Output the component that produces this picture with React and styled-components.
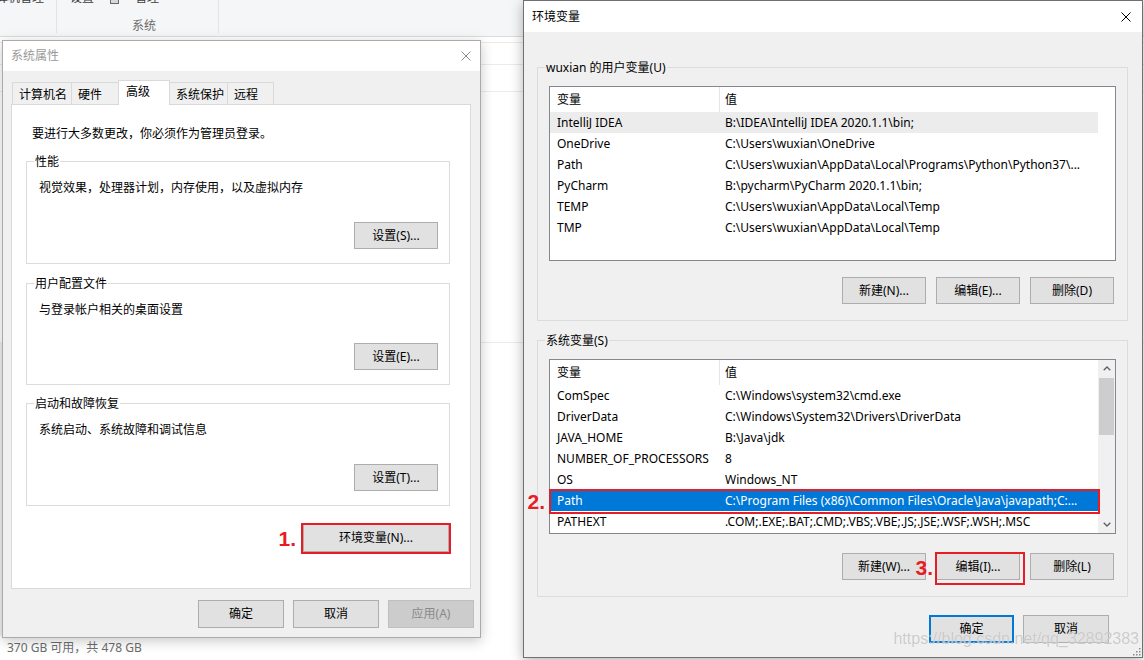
import React from "react";
import styled, { createGlobalStyle, css } from "styled-components";

const FONT = `"Noto Sans", "Noto Sans CJK SC", sans-serif`;
const RED = "#e81c24";

const GlobalStyle = createGlobalStyle`
  * { box-sizing: border-box; }
  html, body { margin: 0; padding: 0; background: #fff; }
  body {
    font-family: ${FONT};
    font-size: 12px;
    line-height: 16px;
    color: #000;
    overflow: hidden;
  }
`;

const Desktop = styled.div`
  position: relative;
  width: 1144px;
  height: 660px;
  overflow: hidden;
  background: #fff;
`;

/* explorer window behind the dialogs */

const Explorer = styled.div`
  display: flex;
  flex-direction: column;
  height: 100%;
`;

const Ribbon = styled.div`
  flex: none;
  display: flex;
  height: 37px;
  background: #f5f6f7;
  border-bottom: 1px solid #dadbdc;
  overflow: hidden;
`;

const RibbonGroup = styled.div`
  flex: ${(p) => (p.$w ? "none" : 1)};
  width: ${(p) => (p.$w ? `${p.$w}px` : "auto")};
  height: 33px;
  display: flex;
  flex-direction: column;
  justify-content: space-between;
  align-items: ${(p) => p.$align || "center"};
  padding: 0 ${(p) => p.$padR || 0}px 0 ${(p) => p.$padL || 0}px;
  border-right: ${(p) => (p.$w ? "1px solid #e2e3e4" : "none")};
`;

const RibbonItems = styled.div`
  display: flex;
  align-items: center;
  gap: ${(p) => p.$gap || 0}px;
  height: 14px;
  margin-top: -9px;
  color: #3b3b3b;
  white-space: nowrap;
`;

const RibbonIcon = styled.span`
  width: 9px;
  height: 12px;
  border: 1px solid #6a6a6a;
  background: #d8d8d8;
`;

const RibbonLabel = styled.div`
  align-self: center;
  color: #6b6b6b;
  line-height: 14px;
`;

const ExplorerLine = styled.div`
  flex: none;
  height: ${(p) => p.$h}px;
  border-bottom: 1px solid #ebebeb;
`;

const ExplorerFill = styled.div`
  flex: 1;
  border-left: 2px solid #f0f0f0;
`;

const StatusBar = styled.div`
  flex: none;
  height: 24px;
  padding-left: 7px;
  display: flex;
  align-items: center;
  color: #6d6d6d;
`;

/* dialog chrome */

const Window = styled.div`
  position: absolute;
  left: ${(p) => p.$x}px;
  top: ${(p) => p.$y}px;
  width: ${(p) => p.$w}px;
  height: ${(p) => p.$h}px;
  display: flex;
  flex-direction: column;
  background: #f0f0f0;
  border: 1px solid ${(p) => (p.$active ? "#707070" : "#aaaaaa")};
  box-shadow: 0 3px 12px rgba(0, 0, 0, ${(p) => (p.$active ? 0.3 : 0.22)});
`;

const TitleBar = styled.div`
  flex: none;
  height: ${(p) => p.$h}px;
  display: flex;
  align-items: center;
  justify-content: space-between;
  padding: 0 ${(p) => p.$padR}px 0 ${(p) => p.$padL}px;
  background: #fff;
  color: ${(p) => (p.$active ? "#000" : "#999")};
`;

const DialogBody = styled.div`
  flex: 1;
  display: flex;
  flex-direction: column;
  padding: ${(p) => p.$pad};
`;

const CloseIcon = ({ color }) => (
  <svg width="10" height="10" viewBox="0 0 10 10">
    <path d="M0.5 0.5 L9.5 9.5 M9.5 0.5 L0.5 9.5" stroke={color} strokeWidth="1" fill="none" />
  </svg>
);

const Button = styled.button`
  flex: none;
  width: ${(p) => p.$w}px;
  height: ${(p) => p.$h || 27}px;
  margin: 0;
  padding: 0;
  font: inherit;
  color: #000;
  background: #e1e1e1;
  border: 1px solid #adadad;
  border-radius: 0;
  ${(p) =>
    p.$default &&
    css`
      border: 2px solid #0078d7;
    `}
  &:disabled {
    color: #8a8a8a;
    background: #cccccc;
    border-color: #bfbfbf;
  }
`;

const ButtonRow = styled.div`
  display: flex;
  justify-content: flex-end;
  gap: ${(p) => p.$gap}px;
  margin-top: ${(p) => p.$mt || 0}px;
  padding-right: ${(p) => p.$pr || 0}px;
`;

/* red annotation frames with step numbers */

const Callout = styled.div`
  position: relative;
  display: ${(p) => (p.$block ? "block" : "flex")};
  flex: none;
  &::after {
    content: "";
    position: absolute;
    inset: ${(p) => p.$inset};
    border: 2px solid ${RED};
    pointer-events: none;
  }
`;

const Marker = styled.span`
  position: absolute;
  right: calc(100% + ${(p) => p.$gap}px);
  top: 50%;
  transform: translateY(-50%);
  margin-top: 1px;
  font-family: "Liberation Sans", Arial, sans-serif;
  font-weight: bold;
  font-size: 21px;
  line-height: 24px;
  color: ${RED};
  white-space: nowrap;
`;

/* group boxes */

const GroupBox = styled.div`
  position: relative;
  flex: none;
  width: ${(p) => (p.$w ? `${p.$w}px` : "auto")};
  height: ${(p) => p.$h}px;
  margin-top: ${(p) => p.$mt}px;
  padding: ${(p) => p.$pad};
  display: flex;
  flex-direction: column;
  border: 1px solid #dcdcdc;
`;

const GroupLegend = styled.span`
  position: absolute;
  top: -8px;
  left: 7px;
  padding: 0 1px;
  background: ${(p) => p.$bg};
  white-space: nowrap;
`;

/* system properties dialog */

const TabStrip = styled.div`
  position: relative;
  z-index: 1;
  display: flex;
  align-items: flex-end;
  height: 24px;
  padding-left: 1px;
`;

const Tab = styled.div`
  flex: none;
  width: ${(p) => p.$w}px;
  height: 22px;
  margin-right: -1px;
  padding: 2px 0 0 6px;
  line-height: 20px;
  white-space: nowrap;
  background: #f0f0f0;
  border: 1px solid #d9d9d9;
  border-bottom: none;
  ${(p) =>
    p.$active &&
    css`
      position: relative;
      z-index: 2;
      height: 25px;
      margin-bottom: -1px;
      padding: 1px 0 0 7px;
      background: #fff;
    `}
`;

const TabPanel = styled.div`
  flex: none;
  height: 485px;
  margin-right: 3px;
  padding: 21px 0 0 14px;
  display: flex;
  flex-direction: column;
  background: #fff;
  border: 1px solid #d9d9d9;
`;

const Notice = styled.div`
  padding-left: 6px;
`;

const GroupText = styled.div`
  flex: 1;
  padding-top: 1px;
`;

const EnvRow = styled.div`
  width: 424px;
  margin-top: 18px;
  padding-right: 1px;
  display: flex;
  justify-content: flex-end;
`;

/* environment variables dialog */

const ListView = styled.div`
  flex: none;
  display: flex;
  height: 175px;
  background: #fff;
  border: 1px solid #828790;
`;

const ListBody = styled.div`
  flex: 1;
  min-width: 0;
`;

const ListHeader = styled.div`
  display: flex;
  height: 25px;
`;

const HeaderCell = styled.div`
  display: flex;
  align-items: center;
  ${(p) =>
    p.$first
      ? css`
          flex: none;
          width: 170px;
          padding-left: 7px;
          border-right: 1px solid #e5e5e5;
        `
      : css`
          flex: 1;
          padding-left: 5px;
        `}
`;

const ListRow = styled.div`
  display: flex;
  align-items: center;
  height: 21px;
  background: ${(p) => (p.$selected ? "#0078d7" : p.$soft ? "#ececec" : "transparent")};
  color: ${(p) => (p.$selected ? "#fff" : "#000")};
`;

const NameCell = styled.div`
  flex: none;
  width: 170px;
  padding-left: 7px;
  white-space: nowrap;
  overflow: hidden;
`;

const ValueCell = styled.div`
  flex: 1;
  min-width: 0;
  padding-left: 5px;
  white-space: nowrap;
  overflow: hidden;
  text-overflow: ellipsis;
`;

const Gutter = styled.div`
  flex: none;
  width: 17px;
`;

const ScrollBar = styled.div`
  flex: none;
  width: 17px;
  display: flex;
  flex-direction: column;
  background: #f0f0f0;
`;

const ScrollArrow = styled.div`
  flex: none;
  height: 17px;
  display: flex;
  align-items: center;
  justify-content: center;
`;

const ScrollTrack = styled.div`
  flex: 1;
  padding: 1px 1px 0;
`;

const ScrollThumb = styled.div`
  height: 57px;
  background: #cdcdcd;
`;

const Watermark = styled.div`
  position: absolute;
  right: 3px;
  bottom: 8px;
  font-family: "Liberation Sans", Arial, sans-serif;
  font-size: 16px;
  line-height: 20px;
  color: rgba(170, 170, 170, 0.6);
  text-shadow: 0 0 1px rgba(255, 255, 255, 0.9);
  white-space: nowrap;
  pointer-events: none;
`;

const Grip = styled.svg`
  position: absolute;
  right: 1px;
  bottom: 1px;
`;

const Chevron = ({ up }) => (
  <svg width="8" height="5" viewBox="0 0 8 5">
    <path
      d={up ? "M0.7 4.3 L4 1 L7.3 4.3" : "M0.7 0.7 L4 4 L7.3 0.7"}
      stroke="#606060"
      strokeWidth="1.3"
      fill="none"
    />
  </svg>
);

const tabs = [
  { label: "计算机名", w: 60 },
  { label: "硬件", w: 48 },
  { label: "高级", w: 52, active: true },
  { label: "系统保护", w: 59 },
  { label: "远程", w: 47 },
];

const settingGroups = [
  { title: "性能", desc: "视觉效果，处理器计划，内存使用，以及虚拟内存", btn: "设置(S)...", h: 103, mt: 19 },
  { title: "用户配置文件", desc: "与登录帐户相关的桌面设置", btn: "设置(E)...", h: 102, mt: 19 },
  { title: "启动和故障恢复", desc: "系统启动、系统故障和调试信息", btn: "设置(T)...", h: 103, mt: 18 },
];

const userVars = [
  ["IntelliJ IDEA", "B:\\IDEA\\IntelliJ IDEA 2020.1.1\\bin;"],
  ["OneDrive", "C:\\Users\\wuxian\\OneDrive"],
  ["Path", "C:\\Users\\wuxian\\AppData\\Local\\Programs\\Python\\Python37\\..."],
  ["PyCharm", "B:\\pycharm\\PyCharm 2020.1.1\\bin;"],
  ["TEMP", "C:\\Users\\wuxian\\AppData\\Local\\Temp"],
  ["TMP", "C:\\Users\\wuxian\\AppData\\Local\\Temp"],
];

const systemVars = [
  ["ComSpec", "C:\\Windows\\system32\\cmd.exe"],
  ["DriverData", "C:\\Windows\\System32\\Drivers\\DriverData"],
  ["JAVA_HOME", "B:\\Java\\jdk"],
  ["NUMBER_OF_PROCESSORS", "8"],
  ["OS", "Windows_NT"],
  ["Path", "C:\\Program Files (x86)\\Common Files\\Oracle\\Java\\javapath;C:..."],
  ["PATHEXT", ".COM;.EXE;.BAT;.CMD;.VBS;.VBE;.JS;.JSE;.WSF;.WSH;.MSC"],
];

function ExplorerBackdrop() {
  return (
    <Explorer>
      <Ribbon>
        <RibbonGroup $w={57} $align="flex-end" $padR={12}>
          <RibbonItems>计算机管理</RibbonItems>
        </RibbonGroup>
        <RibbonGroup $w={162} $align="flex-start" $padL={13}>
          <RibbonItems $gap={16}>
            <span>设置</span>
            <RibbonIcon />
            <span>管理</span>
          </RibbonItems>
          <RibbonLabel>系统</RibbonLabel>
        </RibbonGroup>
        <RibbonGroup />
      </Ribbon>
      <ExplorerLine $h={6} />
      <ExplorerLine $h={22} />
      <ExplorerLine $h={27} />
      <ExplorerLine $h={251} />
      <ExplorerFill />
      <StatusBar>370 GB 可用，共 478 GB</StatusBar>
    </Explorer>
  );
}

function SystemProperties() {
  return (
    <Window $x={2} $y={40} $w={479} $h={598}>
      <TitleBar $h={30} $padL={8} $padR={9}>
        <span>系统属性</span>
        <CloseIcon color="#8a8a8a" />
      </TitleBar>
      <DialogBody $pad="9px 6px 0 8px">
        <TabStrip>
          {tabs.map((t) => (
            <Tab key={t.label} $w={t.w} $active={t.active}>
              {t.label}
            </Tab>
          ))}
        </TabStrip>
        <TabPanel>
          <Notice>要进行大多数更改，你必须作为管理员登录。</Notice>
          {settingGroups.map((g) => (
            <GroupBox key={g.title} $w={424} $h={g.h} $mt={g.mt} $pad="17px 11px 14px 12px">
              <GroupLegend $bg="#fff">{g.title}</GroupLegend>
              <GroupText>{g.desc}</GroupText>
              <ButtonRow>
                <Button $w={84}>{g.btn}</Button>
              </ButtonRow>
            </GroupBox>
          ))}
          <EnvRow>
            <Callout $inset="-1px -2px -2px -2px">
              <Marker $gap={7}>1.</Marker>
              <Button $w={146} $h={28}>环境变量(N)...</Button>
            </Callout>
          </EnvRow>
        </TabPanel>
        <ButtonRow $gap={9} $mt={11}>
          <Button $w={86} $h={28}>确定</Button>
          <Button $w={86} $h={28}>取消</Button>
          <Button $w={86} $h={28} disabled>
            应用(A)
          </Button>
        </ButtonRow>
      </DialogBody>
    </Window>
  );
}

function VarList({ rows, softRow, selectedRow, scroll }) {
  return (
    <ListView>
      <ListBody>
        <ListHeader>
          <HeaderCell $first>变量</HeaderCell>
          <HeaderCell>值</HeaderCell>
        </ListHeader>
        {rows.map(([name, value], i) => {
          const row = (
            <ListRow key={name} $soft={i === softRow} $selected={i === selectedRow}>
              <NameCell>{name}</NameCell>
              <ValueCell>{value}</ValueCell>
            </ListRow>
          );
          if (i !== selectedRow) return row;
          return (
            <Callout key={name} $block $inset="-1px -2px -3px -1px">
              <Marker $gap={5}>2.</Marker>
              {row}
            </Callout>
          );
        })}
      </ListBody>
      {scroll ? (
        <ScrollBar>
          <ScrollArrow>
            <Chevron up />
          </ScrollArrow>
          <ScrollTrack>
            <ScrollThumb />
          </ScrollTrack>
          <ScrollArrow>
            <Chevron />
          </ScrollArrow>
        </ScrollBar>
      ) : (
        <Gutter />
      )}
    </ListView>
  );
}

function EnvironmentVariables() {
  return (
    <Window $x={523} $y={0} $w={620} $h={658} $active>
      <TitleBar $h={31} $padL={8} $padR={11} $active>
        <span>环境变量</span>
        <CloseIcon color="#000" />
      </TitleBar>
      <DialogBody $pad="0 14px 0 13px">
        <GroupBox $h={254} $mt={35} $pad="18px 11px 16px 11px">
          <GroupLegend $bg="#f0f0f0">wuxian 的用户变量(U)</GroupLegend>
          <VarList rows={userVars} softRow={0} />
          <ButtonRow $gap={10} $mt={16} $pr={2}>
            <Button $w={84}>新建(N)...</Button>
            <Button $w={84}>编辑(E)...</Button>
            <Button $w={84}>删除(D)</Button>
          </ButtonRow>
        </GroupBox>
        <GroupBox $h={257} $mt={19} $pad="18px 11px 16px 11px">
          <GroupLegend $bg="#f0f0f0">系统变量(S)</GroupLegend>
          <VarList rows={systemVars} selectedRow={5} scroll />
          <ButtonRow $gap={10} $mt={19} $pr={2}>
            <Button $w={84}>新建(W)...</Button>
            <Callout $inset="-1px -5px -5px -1px">
              <Marker $gap={3}>3.</Marker>
              <Button $w={84}>编辑(I)...</Button>
            </Callout>
            <Button $w={84}>删除(L)</Button>
          </ButtonRow>
        </GroupBox>
        <ButtonRow $gap={9} $mt={18} $pr={19}>
          <Button $w={85} $h={28} $default>
            确定
          </Button>
          <Button $w={86} $h={28}>取消</Button>
        </ButtonRow>
      </DialogBody>
      <Watermark>https://blog.csdn.net/qq_32892383</Watermark>
      <Grip width="10" height="10" viewBox="0 0 10 10">
        {[
          [8, 2],
          [8, 5],
          [5, 5],
          [8, 8],
          [5, 8],
          [2, 8],
        ].map(([x, y]) => (
          <rect key={`${x}-${y}`} x={x} y={y} width="1.5" height="1.5" fill="#8a8a8a" />
        ))}
      </Grip>
    </Window>
  );
}

export default function App() {
  return (
    <>
      <GlobalStyle />
      <Desktop>
        <ExplorerBackdrop />
        <SystemProperties />
        <EnvironmentVariables />
      </Desktop>
    </>
  );
}
